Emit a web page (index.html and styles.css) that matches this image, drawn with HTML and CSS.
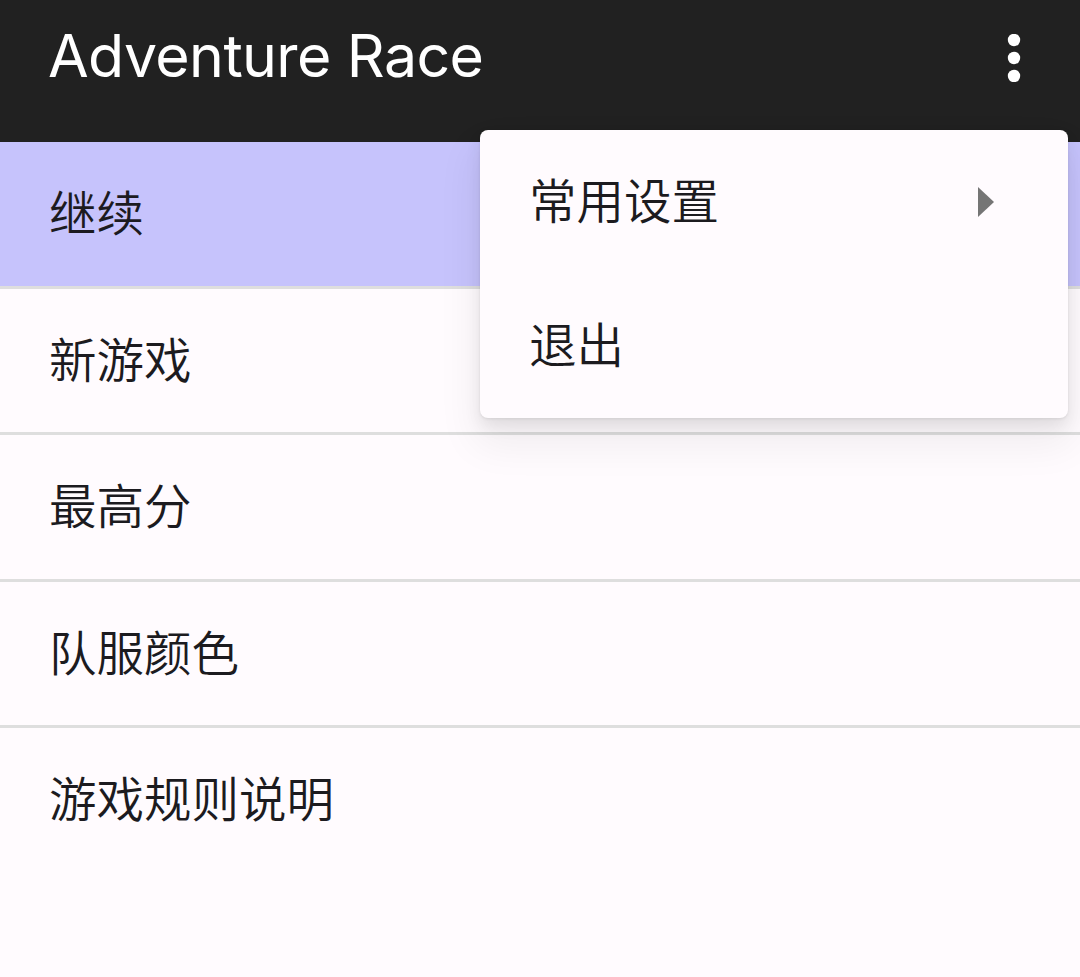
FILE: index.html
```html
<!DOCTYPE html>
<html lang="zh-CN">
<head>
<meta charset="utf-8">
<title>Adventure Race</title>
<link rel="stylesheet" href="styles.css">
</head>
<body>
<div class="app">
  <header class="topbar">
    <h1 class="title">Adventure Race</h1>
    <button class="overflow" aria-label="更多选项">
      <svg width="14" height="48" viewBox="0 0 14 48" aria-hidden="true">
        <circle cx="7" cy="6" r="6.2" fill="#fff"/>
        <circle cx="7" cy="24" r="6.2" fill="#fff"/>
        <circle cx="7" cy="42" r="6.2" fill="#fff"/>
      </svg>
    </button>
  </header>
  <ul class="list">
    <li class="row row-active">继续</li>
    <li class="row">新游戏</li>
    <li class="row">最高分</li>
    <li class="row">队服颜色</li>
    <li class="row row-last">游戏规则说明</li>
  </ul>
  <div class="menu" role="menu">
    <div class="menu-item" role="menuitem">
      <span>常用设置</span>
      <svg class="submenu-arrow" width="16" height="30" viewBox="0 0 16 30" aria-hidden="true">
        <polygon points="0,0 16,15 0,30" fill="#757575"/>
      </svg>
    </div>
    <div class="menu-item" role="menuitem"><span>退出</span></div>
  </div>
</div>
</body>
</html>
```
FILE: styles.css
```css
html, body {
  margin: 0;
  padding: 0;
  background: #fffbfe;
}
body {
  font-family: "Noto Sans CJK SC", "Noto Sans", sans-serif;
  color: #1c1b1f;
  width: 1080px;
  height: 977px;
  overflow: hidden;
}
.app {
  position: relative;
  width: 1080px;
  height: 977px;
}
.topbar {
  height: 142px;
  background: #212121;
  display: flex;
  align-items: flex-start;
  justify-content: space-between;
  padding: 0 59px 0 48px;
  box-sizing: border-box;
}
.title {
  margin: 0;
  padding-top: 14px;
  font-family: Inter, "Noto Sans", sans-serif;
  font-weight: 400;
  font-size: 59px;
  line-height: 84px;
  color: #ffffff;
  letter-spacing: -0.6px;
}
.overflow {
  margin-top: 34px;
  padding: 0;
  border: 0;
  background: none;
  display: flex;
  line-height: 0;
}
.list {
  list-style: none;
  margin: 0;
  padding: 0;
}
.row {
  height: 137.5px;
  padding: 0 0 6px 49px;
  display: flex;
  align-items: center;
  font-size: 47.5px;
  font-weight: 350;
  line-height: 1;
  border-bottom: 3px solid #dedede;
  box-sizing: content-box;
}
.row-active {
  background: #c6c3fc;
}
.row-last {
  border-bottom: 0;
}
.menu {
  position: absolute;
  left: 480px;
  top: 130px;
  width: 588px;
  background: #fffbfe;
  border-radius: 8px;
  box-shadow: 0 22px 40px 6px rgba(0, 0, 0, 0.06), 0 8px 16px rgba(0, 0, 0, 0.08), 0 1px 3px rgba(0, 0, 0, 0.08);
}
.menu-item {
  height: 144px;
  display: flex;
  align-items: center;
  justify-content: space-between;
  padding: 0 74px 6px 49px;
  box-sizing: border-box;
  font-size: 47.5px;
  font-weight: 350;
  line-height: 1;
}
.submenu-arrow {
  display: block;
  margin-top: 6px;
}
```
